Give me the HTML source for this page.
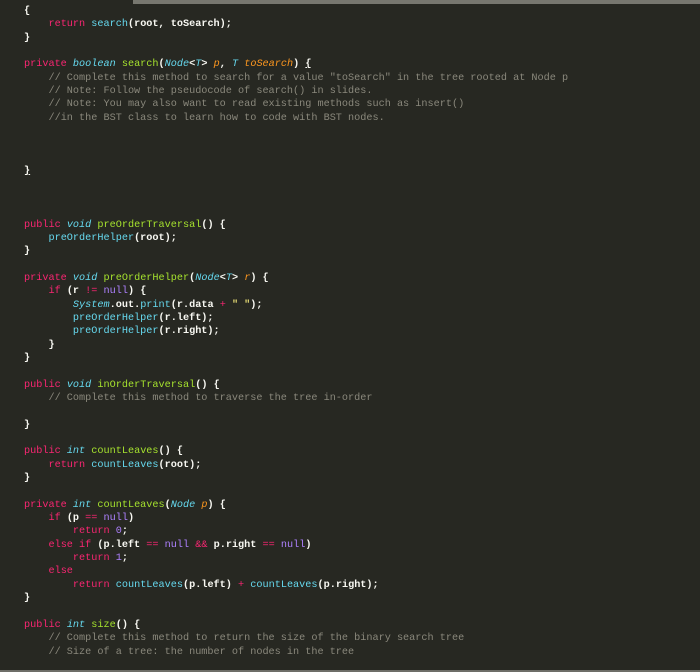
<!DOCTYPE html>
<html><head><style>
html,body{margin:0;padding:0;}
body{width:700px;height:672px;background:#272822;position:relative;overflow:hidden;}
#top{position:absolute;left:133px;top:0;width:567px;height:4px;background:#77776f;}
#bot{position:absolute;left:0;top:670px;width:700px;height:2px;background:#6e6e68;}
pre{position:absolute;left:24px;top:5px;margin:0;font-family:"Liberation Mono",monospace;font-size:10.2px;line-height:13.35px;color:#f8f8f2;font-weight:bold;}
.k{color:#f92672;font-weight:normal}
.t{color:#66d9ef;font-style:italic;font-weight:normal}
.f{color:#a6e22e;font-weight:normal}
.c{color:#66d9ef;font-weight:normal}
.p{color:#fd971f;font-style:italic;font-weight:normal}
.n{color:#ae81ff;font-weight:normal}
.m{color:#8a887c;font-weight:normal}
.s{color:#e6db74}
.g{position:absolute;left:24px;width:1px;background:#3b3c35;}
</style></head><body>
<div id="top"></div>
<pre>{
    <span class="k">return</span> <span class="c">search</span>(root, toSearch);
}

<span class="k">private</span> <span class="t">boolean</span> <span class="f">search</span>(<span class="t">Node</span>&lt;<span class="t">T</span>&gt; <span class="p">p</span>, <span class="t">T</span> <span class="p">toSearch</span>) <u>{</u>
    <span class="m">// Complete this method to search for a value "toSearch" in the tree rooted at Node p</span>
    <span class="m">// Note: Follow the pseudocode of search() in slides.</span>
    <span class="m">// Note: You may also want to read existing methods such as insert()</span>
    <span class="m">//in the BST class to learn how to code with BST nodes.</span>



<u>}</u>



<span class="k">public</span> <span class="t">void</span> <span class="f">preOrderTraversal</span>() {
    <span class="c">preOrderHelper</span>(root);
}

<span class="k">private</span> <span class="t">void</span> <span class="f">preOrderHelper</span>(<span class="t">Node</span>&lt;<span class="t">T</span>&gt; <span class="p">r</span>) {
    <span class="k">if</span> (r <span class="k">!=</span> <span class="n">null</span>) {
        <span class="t">System</span>.out.<span class="c">print</span>(r.data <span class="k">+</span> <span class="s">" "</span>);
        <span class="c">preOrderHelper</span>(r.left);
        <span class="c">preOrderHelper</span>(r.right);
    }
}

<span class="k">public</span> <span class="t">void</span> <span class="f">inOrderTraversal</span>() {
    <span class="m">// Complete this method to traverse the tree in-order</span>

}

<span class="k">public</span> <span class="t">int</span> <span class="f">countLeaves</span>() {
    <span class="k">return</span> <span class="c">countLeaves</span>(root);
}

<span class="k">private</span> <span class="t">int</span> <span class="f">countLeaves</span>(<span class="t">Node</span> <span class="p">p</span>) {
    <span class="k">if</span> (p <span class="k">==</span> <span class="n">null</span>)
        <span class="k">return</span> <span class="n">0</span>;
    <span class="k">else if</span> (p.left <span class="k">==</span> <span class="n">null</span> <span class="k">&amp;&amp;</span> p.right <span class="k">==</span> <span class="n">null</span>)
        <span class="k">return</span> <span class="n">1</span>;
    <span class="k">else</span>
        <span class="k">return</span> <span class="c">countLeaves</span>(p.left) <span class="k">+</span> <span class="c">countLeaves</span>(p.right);
}

<span class="k">public</span> <span class="t">int</span> <span class="f">size</span>() {
    <span class="m">// Complete this method to return the size of the binary search tree</span>
    <span class="m">// Size of a tree: the number of nodes in the tree</span>
</pre>
<div id="bot"></div>
</body></html>
